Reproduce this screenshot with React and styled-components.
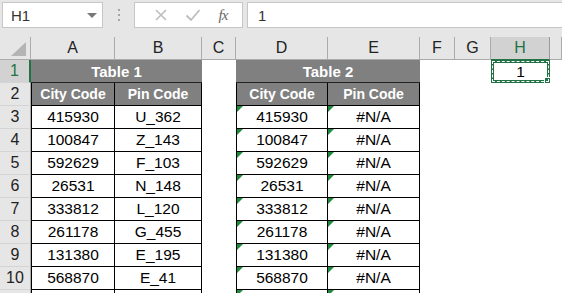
import React from 'react'
import styled, { createGlobalStyle } from 'styled-components'

const GlobalStyle = createGlobalStyle`
  html, body { margin: 0; padding: 0; background: #fff; }
  body { font-family: "Liberation Sans", Arial, sans-serif; overflow: hidden; }
`

const cols = ['A', 'B', 'C', 'D', 'E', 'F', 'G', 'H', '']
const widths = '31px 84px 87px 34px 92px 92px 35px 36px 59px 12px'

const rows = [
  ['415930', 'U_362'],
  ['100847', 'Z_143'],
  ['592629', 'F_103'],
  ['26531', 'N_148'],
  ['333812', 'L_120'],
  ['261178', 'G_455'],
  ['131380', 'E_195'],
  ['568870', 'E_41'],
  ['', ''],
]

function App() {
  return (
    <Page>
      <GlobalStyle />
      <FormulaBar>
        <NameBox>
          <span>H1</span>
          <Caret />
        </NameBox>
        <Grip>
          <i /><i /><i />
        </Grip>
        <Buttons>
          <svg width="14" height="14" viewBox="0 0 14 14">
            <path d="M2 2 L12 12 M12 2 L2 12" stroke="#bdbdbd" strokeWidth="1.6" />
          </svg>
          <svg width="16" height="14" viewBox="0 0 16 14">
            <path d="M1.5 7.5 L6 12 L14.5 2" stroke="#bdbdbd" strokeWidth="1.8" fill="none" />
          </svg>
          <Fx>fx</Fx>
        </Buttons>
        <Input>1</Input>
      </FormulaBar>

      <Sheet>
        <Corner><Tri /></Corner>
        {cols.map((c, i) => (
          <ColHead key={i} $sel={c === 'H'}>{c}</ColHead>
        ))}

        {/* row 1 */}
        <RowHead $sel>1</RowHead>
        <Title $span={2}>Table 1</Title>
        <Cell />
        <Title $span={2}>Table 2</Title>
        <Cell />
        <Cell />
        <Copied>1</Copied>
        <Cell />

        {/* row 2 */}
        <RowHead>2</RowHead>
        <Head $first>City Code</Head>
        <Head>Pin Code</Head>
        <Cell />
        <Head $first>City Code</Head>
        <Head>Pin Code</Head>
        <Cell />
        <Cell />
        <Cell />
        <Cell />

        {rows.map((r, i) => (
          <React.Fragment key={i}>
            <RowHead>{r[0] ? i + 3 : ''}</RowHead>
            <Data $first>{r[0]}</Data>
            <Data>{r[1]}</Data>
            <Cell />
            <Data $first $flag>{r[0]}</Data>
            <Data $flag>{r[0] ? '#N/A' : ''}</Data>
            <Cell />
            <Cell />
            <Cell />
            <Cell />
          </React.Fragment>
        ))}
      </Sheet>
    </Page>
  )
}

export default App

const Page = styled.div`
  width: 562px;
  height: 293px;
  overflow: hidden;
  background: #e6e6e6;
`

const FormulaBar = styled.div`
  display: flex;
  align-items: center;
  height: 37px;
  padding-left: 2px;
  box-sizing: border-box;
  padding-bottom: 9px;
  padding-top: 2px;
`

const NameBox = styled.div`
  width: 101px;
  height: 26px;
  box-sizing: border-box;
  background: #fff;
  border: 1px solid #c6c6c6;
  display: flex;
  align-items: center;
  justify-content: space-between;
  padding: 0 5px 0 8px;
  font-size: 15px;
  color: #333;
`

const Caret = styled.div`
  width: 0;
  height: 0;
  border-left: 5px solid transparent;
  border-right: 5px solid transparent;
  border-top: 5px solid #777;
`

const Grip = styled.div`
  width: 31px;
  display: flex;
  flex-direction: column;
  align-items: center;
  gap: 3px;
  i {
    width: 2px;
    height: 2px;
    background: #a6a6a6;
  }
`

const Buttons = styled.div`
  width: 109px;
  height: 26px;
  box-sizing: border-box;
  background: #fff;
  border: 1px solid #c6c6c6;
  display: flex;
  align-items: center;
  justify-content: space-around;
  padding: 0 6px 0 10px;
`

const Fx = styled.span`
  font-family: "Liberation Serif", serif;
  font-style: italic;
  font-size: 15px;
  color: #666;
  letter-spacing: -1px;
`

const Input = styled.div`
  flex: 1;
  height: 26px;
  margin-left: 4px;
  box-sizing: border-box;
  background: #fff;
  border: 1px solid #c6c6c6;
  border-right: none;
  display: flex;
  align-items: center;
  padding-left: 10px;
  font-size: 15px;
  color: #333;
`

const Sheet = styled.div`
  display: grid;
  grid-template-columns: ${widths};
  grid-template-rows: 23px;
  grid-auto-rows: 23px;
  background: #fff;
`

const Corner = styled.div`
  background: #e6e6e6;
  border-right: 1px solid #ababab;
  border-bottom: 1px solid #ababab;
  position: relative;
`

const Tri = styled.div`
  position: absolute;
  right: 4px;
  bottom: 3px;
  width: 0;
  height: 0;
  border-left: 15px solid transparent;
  border-bottom: 14px solid #b4b4b4;
`

const ColHead = styled.div`
  background: ${p => (p.$sel ? '#d2d2d2' : '#e6e6e6')};
  color: ${p => (p.$sel ? '#217346' : '#222')};
  border-right: 1px solid ${p => (p.$sel ? '#9b9b9b' : '#ababab')};
  border-bottom: 1px solid ${p => (p.$sel ? '#217346' : '#ababab')};
  box-sizing: border-box;
  font-size: 16px;
  display: flex;
  align-items: center;
  justify-content: center;
`

const RowHead = styled.div`
  background: ${p => (p.$sel ? '#d2d2d2' : '#e6e6e6')};
  color: ${p => (p.$sel ? '#217346' : '#222')};
  border-right: ${p => (p.$sel ? '2px solid #217346' : '1px solid #ababab')};
  border-bottom: 1px solid #d4d4d4;
  box-sizing: border-box;
  font-size: 16px;
  display: flex;
  align-items: center;
  justify-content: center;
`

const Cell = styled.div`
  background: #fff;
`

const Title = styled.div`
  grid-column: span ${p => p.$span};
  background: #808080;
  color: #fff;
  font-weight: bold;
  font-size: 15px;
  display: flex;
  align-items: center;
  justify-content: center;
  border-bottom: 1px solid #222;
  box-sizing: border-box;
`

const Head = styled.div`
  background: #808080;
  color: #fff;
  font-weight: bold;
  font-size: 14px;
  display: flex;
  align-items: center;
  justify-content: center;
  border-right: 1px solid #000;
  border-left: ${p => (p.$first ? '1px solid #000' : 'none')};
  border-bottom: 1px solid #000;
  box-sizing: border-box;
`

const Data = styled.div`
  position: relative;
  background: #fff;
  color: #000;
  font-size: 15.5px;
  display: flex;
  align-items: center;
  justify-content: center;
  border-right: 1px solid #000;
  border-left: ${p => (p.$first ? '1px solid #000' : 'none')};
  border-bottom: 1px solid #000;
  box-sizing: border-box;

  &::before {
    content: '';
    display: ${p => (p.$flag ? 'block' : 'none')};
    position: absolute;
    left: 0;
    top: 0;
    width: 0;
    height: 0;
    border-top: 6px solid #1e8a3c;
    border-right: 6px solid transparent;
  }
`

const Copied = styled.div`
  position: relative;
  background: #fff;
  font-size: 15.5px;
  color: #000;
  display: flex;
  align-items: center;
  justify-content: center;
  border: 3px solid #217346;
  box-sizing: border-box;

  &::after {
    content: '';
    position: absolute;
    inset: -2px;
    border: 1px dashed #fff;
  }

  &::before {
    content: '';
    position: absolute;
    right: -4px;
    bottom: -4px;
    width: 5px;
    height: 5px;
    background: #217346;
    border: 1px solid #fff;
  }
`
